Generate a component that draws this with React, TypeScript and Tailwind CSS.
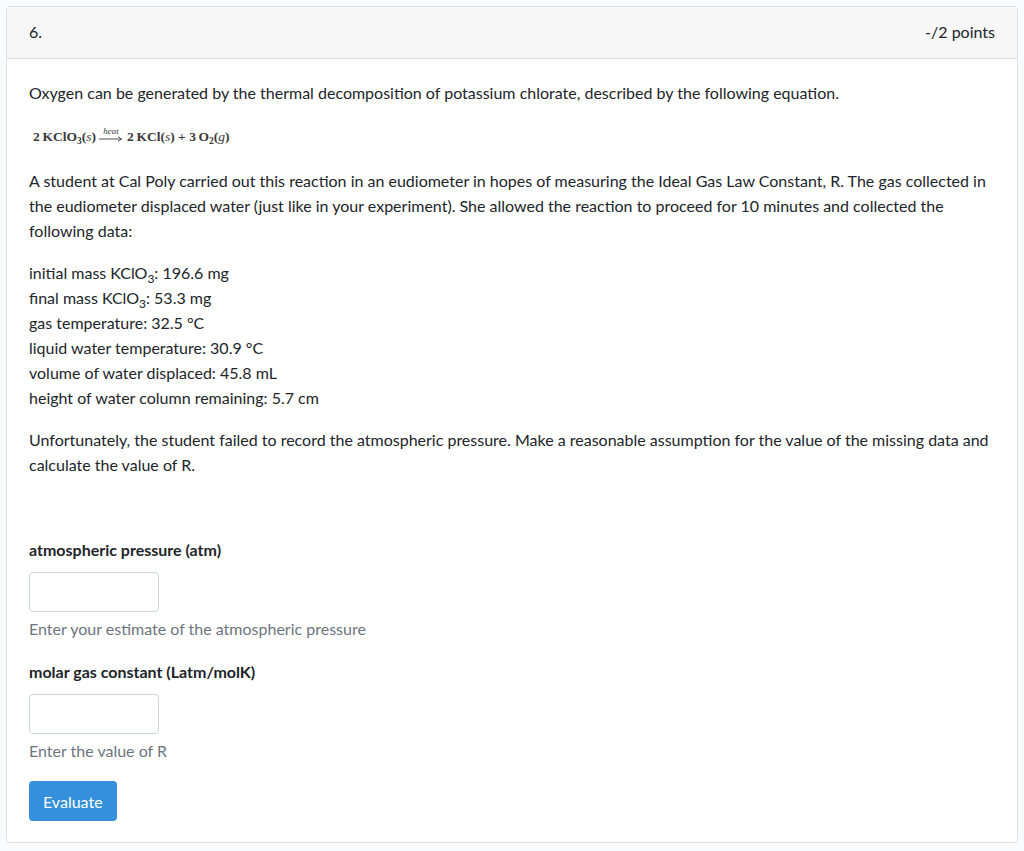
export default function App() {
  const rows = [
    { label: 'initial mass KClO', sub: '3', rest: ': 196.6 mg' },
    { label: 'final mass KClO', sub: '3', rest: ': 53.3 mg' },
    { label: 'gas temperature: 32.5 °C' },
    { label: 'liquid water temperature: 30.9 °C' },
    { label: 'volume of water displaced: 45.8 mL' },
    { label: 'height of water column remaining: 5.7 cm' },
  ];

  return (
    <div className="min-h-[851px] bg-[#f8fafc] p-[6px] text-[16px] leading-[25px] text-[#212529]" style={{ fontFamily: 'Lato, "Open Sans", sans-serif' }}>
      <div className="rounded border border-[#dfdfdf] bg-white">
        {/* Header */}
        <div className="flex h-[52px] items-center justify-between border-b border-[#dfdfdf] bg-[#f7f7f7] px-[22px] pb-[2px]">
          <span>6.</span>
          <span>-/2 points</span>
        </div>

        {/* Body */}
        <div className="px-[22px] pt-[21px] pb-[21px]">
          <p>Oxygen can be generated by the thermal decomposition of potassium chlorate, described by the following equation.</p>

          {/* equation */}
          <div className="mt-[19px] flex h-[24px] items-center pl-[4px] pt-[2px] text-[13.5px] font-bold text-[#3a3a3a]" style={{ fontFamily: '"Liberation Serif", serif' }}>
            <span>
              2&thinsp;KClO<span className="relative top-[3px] text-[9.5px]">3</span>(<i className="font-normal">s</i>)
            </span>
            <span className="ml-[3px] mr-[4px] flex w-[24px] flex-col items-center self-start pt-[1px]">
              <i className="text-[9px] font-normal leading-[9px]">heat</i>
              <svg width="24" height="6" viewBox="0 0 24 6" className="block">
                <path d="M0 3h22.5M19 0.6l3.5 2.4-3.5 2.4" fill="none" stroke="#3a3a3a" strokeWidth="0.9" />
              </svg>
            </span>
            <span>
              2&thinsp;KCl(<i className="font-normal">s</i>) + 3&thinsp;O<span className="relative top-[3px] text-[9.5px]">2</span>(<i className="font-normal">g</i>)
            </span>
          </div>

          <p className="mt-[20px]">
            A student at Cal Poly carried out this reaction in an eudiometer in hopes of measuring the Ideal Gas Law Constant, R. The gas collected in the eudiometer displaced water (just like in your experiment). She allowed the reaction to proceed for 10 minutes and collected the following data:
          </p>

          <div className="mt-[17px]">
            {rows.map((r) => (
              <div key={r.label} className="h-[25px]">
                {r.label}
                {r.sub && <span className="relative top-[4px] text-[12px] leading-none">{r.sub}</span>}
                {r.rest}
              </div>
            ))}
          </div>

          <p className="mt-[17px]">
            Unfortunately, the student failed to record the atmospheric pressure. Make a reasonable assumption for the value of the missing data and calculate the value of R.
          </p>

          <div className="mt-[60px] font-bold">atmospheric pressure (atm)</div>
          <input className="mt-[10px] block h-[40px] w-[130px] rounded border border-[#ced4da] bg-white" />
          <div className="mt-[4px] text-[#6c757d]">Enter your estimate of the atmospheric pressure</div>

          <div className="mt-[18px] font-bold">molar gas constant (Latm/molK)</div>
          <input className="mt-[10px] block h-[40px] w-[130px] rounded border border-[#ced4da] bg-white" />
          <div className="mt-[4px] text-[#6c757d]">Enter the value of R</div>

          <button className="mt-[18px] h-[40px] rounded bg-[#3490dc] px-[14px] text-white">Evaluate</button>
        </div>
      </div>
    </div>
  );
}
